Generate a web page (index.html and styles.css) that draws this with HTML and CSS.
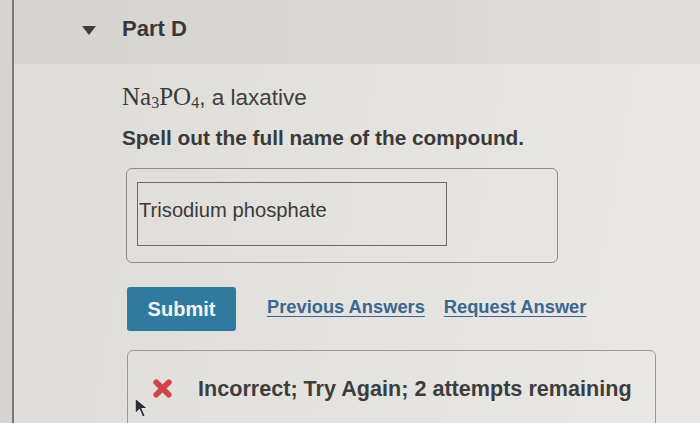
FILE: index.html
```html
<!DOCTYPE html>
<html lang="en">
<head>
<meta charset="utf-8">
<title>Part D</title>
<link rel="stylesheet" href="styles.css">
</head>
<body>
<div class="page">
  <div class="rail">
    <header class="part-head">
      <span class="caret"></span>
      <h2 class="part-title">Part D</h2>
    </header>
    <section class="part-body">
      <p class="question"><span class="formula">Na<sub>3</sub>PO<sub>4</sub></span>, a laxative</p>
      <p class="prompt">Spell out the full name of the compound.</p>
      <div class="answer-box">
        <div class="answer-input">Trisodium phosphate</div>
      </div>
      <div class="actions">
        <button class="submit" type="button">Submit</button>
        <a class="link" href="#">Previous Answers</a>
        <a class="link" href="#">Request Answer</a>
      </div>
      <div class="feedback">
        <svg class="x-icon" viewBox="0 0 20 20" width="21" height="21" aria-hidden="true">
          <path d="M4 4 L16 16 M16 4 L4 16" stroke="#d4424e" stroke-width="5.5" stroke-linecap="round"/>
        </svg>
        <span class="feedback-text">Incorrect; Try Again; 2 attempts remaining</span>
      </div>
    </section>
  </div>
  <svg class="cursor" viewBox="0 0 14 20" width="15" height="21" aria-hidden="true">
    <path d="M1 1 L1 16 L5 12 L8 19 L10.5 18 L7.5 11 L13 11 Z" fill="#2b2f36" stroke="#e8e8e8" stroke-width="1"/>
  </svg>
</div>
</body>
</html>
```

FILE: styles.css
```css
html, body {
  margin: 0;
  padding: 0;
}
body {
  width: 700px;
  height: 423px;
  overflow: hidden;
  font-family: "Liberation Sans", Arial, sans-serif;
  color: #3b3b3b;
  background: #d9d7d3;
}
.page {
  position: relative;
  height: 423px;
  padding-left: 12px;
  background: linear-gradient(90deg, #d6d4d0 0, #d6d4d0 12px, transparent 12px);
}
.rail {
  border-left: 2px solid #7a7976;
  height: 423px;
  background: linear-gradient(100deg, #dedcd8 0%, #e4e2de 45%, #e9e8e5 100%);
}
.part-head {
  height: 64px;
  box-sizing: border-box;
  display: flex;
  align-items: center;
  padding: 0 0 6px 68px;
  background: linear-gradient(90deg, #d6d4d0 0%, #dad8d4 50%, #dfdeda 100%);
}
.caret {
  width: 0;
  height: 0;
  border-left: 7px solid transparent;
  border-right: 7px solid transparent;
  border-top: 9px solid #3e3e40;
  margin-right: 26px;
  margin-top: 2px;
}
.part-title {
  margin: 0;
  font-size: 22px;
  font-weight: bold;
  color: #38383a;
  line-height: 28px;
}
.part-body {
  padding-left: 108px;
}
.question {
  margin: 19px 0 0;
  font-size: 22.5px;
  line-height: 28px;
  color: #404040;
}
.formula {
  font-family: "Liberation Serif", "Times New Roman", serif;
  font-size: 25px;
  color: #3a3a3a;
}
.formula sub {
  font-size: 16px;
  vertical-align: -3px;
  line-height: 0;
}
.prompt {
  margin: 13px 0 0;
  font-size: 20.8px;
  font-weight: bold;
  line-height: 26px;
  color: #3a3a3a;
}
.answer-box {
  margin: 17px 0 0 4px;
  width: 432px;
  height: 95px;
  box-sizing: border-box;
  border: 1px solid #8d8c89;
  border-radius: 6px;
  padding: 13px 0 0 10px;
}
.answer-input {
  width: 310px;
  height: 64px;
  box-sizing: border-box;
  border: 1px solid #6c6b68;
  padding: 15px 0 0 1px;
  font-size: 20.2px;
  line-height: 24px;
  color: #3a3a3a;
}
.actions {
  margin: 24px 0 0 5px;
  display: flex;
  align-items: center;
}
.submit {
  width: 109px;
  height: 44px;
  border: none;
  border-radius: 3px;
  background: #2f7ba0;
  color: #f4f6f8;
  font-family: "Liberation Sans", Arial, sans-serif;
  font-size: 20px;
  font-weight: bold;
  padding: 0;
  margin-right: 31px;
}
.link {
  font-size: 18.3px;
  font-weight: bold;
  color: #38688f;
  text-decoration: underline;
  text-underline-offset: 3px;
  margin-right: 19px;
  margin-top: -4px;
}
.feedback {
  margin: 19px 0 0 5px;
  width: 529px;
  height: 90px;
  box-sizing: border-box;
  border: 1px solid #9a9996;
  border-radius: 6px;
  padding: 26px 0 0 24px;
  display: flex;
  align-items: flex-start;
}
.x-icon {
  flex: none;
  margin-top: 1px;
  margin-right: 25px;
}
.feedback-text {
  font-size: 21.6px;
  font-weight: bold;
  line-height: 24px;
  color: #3d3d3d;
}
.cursor {
  position: absolute;
  left: 134px;
  top: 397px;
}
```
